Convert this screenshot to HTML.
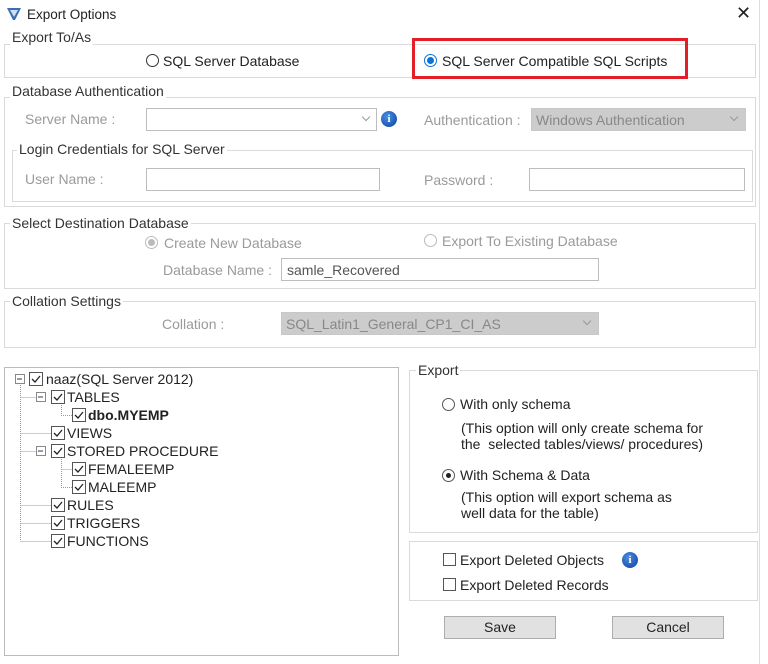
<!DOCTYPE html>
<html><head><meta charset="utf-8"><style>
*{box-sizing:border-box;margin:0;padding:0}
body{width:768px;height:664px;background:#fff;font-family:"Liberation Sans",sans-serif;font-size:14px;color:#222;position:relative;overflow:hidden}
.a{position:absolute;white-space:nowrap}
.g{position:absolute;border:1px solid #dadada}
.lg{position:absolute;background:#fff;padding:0 2px;color:#333;font-size:14px}
.dis{color:#9a9a9a}
.inp{position:absolute;border:1px solid #bdbdbd;background:#fff;height:23px}
.cmb{position:absolute;border:1px solid #c8c8c8;background:#cccccc;height:23px;color:#888;padding:3px 4px}
.rad{position:absolute;width:13px;height:13px;border:1px solid #333;border-radius:50%;background:#fff}
.cb{position:absolute;width:13px;height:13px;border:1px solid #555;background:#fff}
.btn{position:absolute;background:#e1e1e1;border:1px solid #adadad;height:23px;text-align:center;line-height:21px;font-size:14px}
.info{position:absolute;width:16px;height:16px;border-radius:50%;background:radial-gradient(circle at 40% 35%,#4a8fe0,#0b3fa0);color:#fff;font:bold 11px "Liberation Serif",serif;text-align:center;line-height:16px}
.chev{position:absolute;width:6px;height:6px;border-right:1px solid #999;border-bottom:1px solid #999;transform:rotate(45deg)}
</style></head><body>
<div class="a" style="left:759px;top:0;width:1px;height:664px;background:#ddd"></div>
<svg class="a" style="left:6px;top:6px" width="16" height="16"><path d="M1 2 L15 2 L9 14 L7 14 Z" fill="#3b6fb5"/><path d="M4 4 L12 4 L8 11Z" fill="#cfe0f5"/></svg>
<div class="a" style="left:27px;top:7px;font-size:13.5px">Export Options</div>
<div class="a" style="left:736px;top:3px;font-size:18px;color:#222">✕</div>

<div class="g" style="left:4px;top:44px;width:752px;height:34px"></div>
<div class="lg" style="left:10px;top:29px">Export To/As</div>
<div class="rad" style="left:146px;top:54px"></div>
<div class="a" style="left:163px;top:53px">SQL Server Database</div>
<div class="a" style="left:412px;top:38px;width:276px;height:41px;border:3px solid #e41e26"></div>
<div class="rad" style="left:424px;top:54px;border-color:#0a72d6"><div style="position:absolute;left:2px;top:2px;width:7px;height:7px;border-radius:50%;background:#0a72d6"></div></div>
<div class="a" style="left:442px;top:53px">SQL Server Compatible SQL Scripts</div>

<div class="g" style="left:4px;top:97px;width:752px;height:110px"></div>
<div class="lg" style="left:10px;top:83px">Database Authentication</div>
<div class="a dis" style="left:25px;top:111px">Server Name :</div>
<div class="inp" style="left:146px;top:108px;width:231px"></div><div class="chev" style="left:363px;top:114px"></div>
<div class="info" style="left:381px;top:111px">i</div>
<div class="a dis" style="left:424px;top:112px">Authentication :</div>
<div class="cmb" style="left:531px;top:108px;width:215px">Windows Authentication</div><div class="chev" style="left:731px;top:114px"></div>
<div class="g" style="left:12px;top:150px;width:741px;height:52px"></div>
<div class="lg" style="left:17px;top:141px">Login Credentials for SQL Server</div>
<div class="a dis" style="left:25px;top:171px">User Name :</div>
<div class="inp" style="left:146px;top:168px;width:234px"></div>
<div class="a dis" style="left:424px;top:172px">Password :</div>
<div class="inp" style="left:529px;top:168px;width:216px"></div>

<div class="g" style="left:4px;top:223px;width:752px;height:66px"></div>
<div class="lg" style="left:10px;top:215px">Select Destination Database</div>
<div class="rad" style="left:145px;top:236px;border-color:#bbb"><div style="position:absolute;left:2px;top:2px;width:7px;height:7px;border-radius:50%;background:#bbb"></div></div>
<div class="a dis" style="left:164px;top:235px">Create New Database</div>
<div class="rad" style="left:424px;top:234px;border-color:#bbb"></div>
<div class="a dis" style="left:442px;top:233px">Export To Existing Database</div>
<div class="a dis" style="left:163px;top:262px">Database Name :</div>
<div class="inp" style="left:281px;top:258px;width:318px;color:#555;padding:3px 5px">samle_Recovered</div>

<div class="g" style="left:4px;top:301px;width:752px;height:47px"></div>
<div class="lg" style="left:10px;top:293px">Collation Settings</div>
<div class="a dis" style="left:162px;top:316px">Collation :</div>
<div class="cmb" style="left:281px;top:312px;width:318px">SQL_Latin1_General_CP1_CI_AS</div><div class="chev" style="left:584px;top:318px"></div>

<div class="g" style="left:4px;top:367px;width:395px;height:289px;border-color:#bbb"></div>
<svg class="a" style="left:0;top:360px" width="260" height="200" font-family="Liberation Sans" font-size="14" fill="#222">
<g stroke="#999" stroke-dasharray="1,1" fill="none">
<path d="M20.5 25V181M20.5 37.5H36M20.5 73.5H51M20.5 91.5H36M20.5 145.5H51M20.5 163.5H51M20.5 181.5H51M61.5 43V55.5H72M61.5 97V127.5H72M61.5 109.5H72"/>
</g>
<g fill="#fff" stroke="#888"><rect x="15.5" y="14.5" width="9" height="9"/><rect x="36.5" y="32.5" width="9" height="9"/><rect x="36.5" y="86.5" width="9" height="9"/></g>
<path d="M17 19h5M38 37h5M38 91h5" stroke="#335"/>
<g fill="#fff" stroke="#555">
<rect x="29.5" y="12.5" width="13" height="13"/><rect x="51.5" y="30.5" width="13" height="13"/><rect x="72.5" y="48.5" width="13" height="13"/><rect x="51.5" y="66.5" width="13" height="13"/><rect x="51.5" y="84.5" width="13" height="13"/><rect x="72.5" y="102.5" width="13" height="13"/><rect x="72.5" y="120.5" width="13" height="13"/><rect x="51.5" y="138.5" width="13" height="13"/><rect x="51.5" y="156.5" width="13" height="13"/><rect x="51.5" y="174.5" width="13" height="13"/></g>
<g fill="none" stroke="#222" stroke-width="1.3">
<path d="M32 19l3 3 5-6M54 37l3 3 5-6M75 55l3 3 5-6M54 73l3 3 5-6M54 91l3 3 5-6M75 109l3 3 5-6M75 127l3 3 5-6M54 145l3 3 5-6M54 163l3 3 5-6M54 181l3 3 5-6"/></g>
<text x="46" y="24">naaz(SQL Server 2012)</text>
<text x="67" y="42">TABLES</text>
<text x="88" y="60" font-weight="bold">dbo.MYEMP</text>
<text x="67" y="78">VIEWS</text>
<text x="67" y="96">STORED PROCEDURE</text>
<text x="88" y="114">FEMALEEMP</text>
<text x="88" y="132">MALEEMP</text>
<text x="67" y="150">RULES</text>
<text x="67" y="168">TRIGGERS</text>
<text x="67" y="186">FUNCTIONS</text>
</svg>

<div class="g" style="left:409px;top:370px;width:349px;height:163px"></div>
<div class="lg" style="left:416px;top:362px">Export</div>
<div class="rad" style="left:442px;top:398px;border-color:#555"></div>
<div class="a" style="left:460px;top:396px">With only schema</div>
<div class="a" style="left:461px;top:420px;line-height:16px">(This option will only create schema for<br>the&nbsp; selected tables/views/ procedures)</div>
<div class="rad" style="left:442px;top:469px;border-color:#555"><div style="position:absolute;left:3px;top:3px;width:5px;height:5px;border-radius:50%;background:#222"></div></div>
<div class="a" style="left:460px;top:467px">With Schema &amp; Data</div>
<div class="a" style="left:461px;top:489px;line-height:16px">(This option will export schema as<br>well data for the table)</div>

<div class="g" style="left:409px;top:541px;width:349px;height:60px"></div>
<div class="cb" style="left:443px;top:553px"></div>
<div class="a" style="left:460px;top:552px">Export Deleted Objects</div>
<div class="info" style="left:622px;top:552px">i</div>
<div class="cb" style="left:443px;top:578px"></div>
<div class="a" style="left:460px;top:577px">Export Deleted Records</div>

<div class="btn" style="left:444px;top:616px;width:112px">Save</div>
<div class="btn" style="left:612px;top:616px;width:112px">Cancel</div>
</body></html>
